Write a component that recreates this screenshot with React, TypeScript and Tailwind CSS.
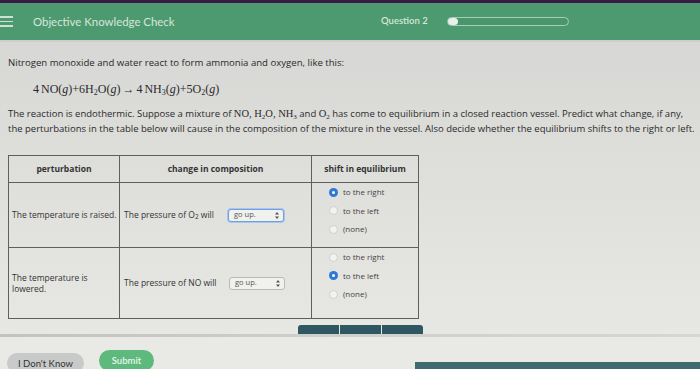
import React from 'react'

function Sel({ focused }: { focused?: boolean }) {
  return (
    <div
      className={
        'flex h-[13px] w-[56px] items-center justify-between rounded-[3px] bg-[#f1f1ee] pl-[5px] pr-[4px] text-[7.5px] leading-none text-[#555] ' +
        (focused ? 'border border-[#6f9fe0] shadow-[0_0_0_1px_#a9c6ee]' : 'border border-[#b9b9b6]')
      }
    >
      <span>go up.</span>
      <svg width="4" height="7" viewBox="0 0 4 7">
        <path d="M2 0 L4 2.6 L0 2.6 Z M2 7 L4 4.4 L0 4.4 Z" fill="#555" />
      </svg>
    </div>
  )
}

function Radio({ label, on }: { label: string; on?: boolean }) {
  return (
    <div className="flex h-[18.5px] items-center gap-[5px]">
      {on ? (
        <span className="flex h-[9px] w-[9px] items-center justify-center rounded-full bg-[#2f78d6]">
          <span className="h-[3px] w-[3px] rounded-full bg-white" />
        </span>
      ) : (
        <span className="h-[9px] w-[9px] rounded-full border border-[#cfcfcc] bg-[#f2f2ef]" />
      )}
      <span className="text-[8px] text-[#444]">{label}</span>
    </div>
  )
}

const serif = { fontFamily: '"Liberation Serif", serif' }

export default function App() {
  return (
    <div
      className="relative h-[369px] w-[700px] overflow-hidden bg-gradient-to-b from-[#d5d5d3] via-[#dfdfdc] to-[#e9e9e5] text-[#2a2a2a]"
      style={{ fontFamily: '"Open Sans", "DejaVu Sans", sans-serif' }}
    >
      {/* top strip + header */}
      <div className="h-[3px] bg-[#3a1b45]" />
      <div
        className="flex h-[37px] items-center bg-[#4e9a70] text-[#d6e6da]"
        style={{ fontFamily: 'Lato, "Open Sans", sans-serif' }}
      >
        <div className="flex w-[13px] flex-col gap-[3px]">
          <span className="h-[1.5px] bg-[#cfe0d4]" />
          <span className="h-[1.5px] bg-[#cfe0d4]" />
          <span className="h-[1.5px] bg-[#cfe0d4]" />
        </div>
        <span className="ml-[20px] w-[348px] text-[11.4px]">Objective Knowledge Check</span>
        <span className="text-[9.5px] font-semibold">Question 2</span>
        <div className="ml-[19px] flex h-[9px] w-[122px] items-center rounded-full border border-[#a9cdb5] bg-[#4a966b]">
          <span className="h-[7px] w-[10px] rounded-full bg-[#e9efe9]" />
        </div>
      </div>
      <div className="h-[2px] bg-[#cdcdcb]" />

      <div className="pl-[8px] pt-[14px]">
        <p className="text-[9.6px] leading-[14px]">
          Nitrogen monoxide and water react to form ammonia and oxygen, like this:
        </p>
        <p className="ml-[25px] mt-[12px] text-[12px] leading-[14px]" style={serif}>
          4<span className="ml-[2px]">NO</span>(<i>g</i>)+6H<sub className="text-[8px]">2</sub>O(<i>g</i>)
          <span className="mx-[2px]">→</span>4<span className="ml-[2px]">NH</span>
          <sub className="text-[8px]">3</sub>(<i>g</i>)+5O<sub className="text-[8px]">2</sub>(<i>g</i>)
        </p>
        <p className="mt-[10px] text-[9.5px] leading-[15px]">
          The reaction is endothermic. Suppose a mixture of{' '}
          <span style={serif} className="text-[10.5px]">
            NO, H<sub className="text-[7px]">2</sub>O, NH<sub className="text-[7px]">3</sub>
          </span>{' '}
          and{' '}
          <span style={serif} className="text-[10.5px]">
            O<sub className="text-[7px]">2</sub>
          </span>{' '}
          has come to equilibrium in a closed reaction vessel. Predict what change, if any,
          <br />
          the perturbations in the table below will cause in the composition of the mixture in the
          vessel. Also decide whether the equilibrium shifts to the right or left.
        </p>

        <table className="mt-[19px] w-[411px] border-collapse border border-[#5f5f5f] text-[8.5px] text-[#333]">
          <thead>
            <tr className="h-[27px]">
              <th className="w-[111px] border border-[#5f5f5f] font-bold">perturbation</th>
              <th className="w-[192px] border border-[#5f5f5f] font-bold">change in composition</th>
              <th className="border border-[#5f5f5f] font-bold">shift in equilibrium</th>
            </tr>
          </thead>
          <tbody>
            <tr className="h-[65px]">
              <td className="border border-[#5f5f5f] pl-[3px] whitespace-nowrap">
                The temperature is raised.
              </td>
              <td className="border border-[#5f5f5f] pl-[4px]">
                <div className="flex items-center">
                  <span className="w-[104px]">
                    The pressure of O<sub className="text-[6.5px]">2</sub> will
                  </span>
                  <Sel focused />
                </div>
              </td>
              <td className="border border-[#5f5f5f] pl-[17px] align-top">
                <Radio label="to the right" on />
                <Radio label="to the left" />
                <Radio label="(none)" />
              </td>
            </tr>
            <tr className="h-[71px]">
              <td className="border border-[#5f5f5f] pl-[3px] leading-[11px]">
                The temperature is
                <br />
                lowered.
              </td>
              <td className="border border-[#5f5f5f] pl-[4px]">
                <div className="flex items-center">
                  <span className="w-[105px]">The pressure of NO will</span>
                  <Sel />
                </div>
              </td>
              <td className="border border-[#5f5f5f] pl-[17px] align-top">
                <Radio label="to the right" />
                <Radio label="to the left" on />
                <Radio label="(none)" />
              </td>
            </tr>
          </tbody>
        </table>
      </div>

      {/* tool tabs */}
      <div className="ml-[298px] mt-[6px] flex h-[9px] w-[125px] gap-[1px] overflow-hidden rounded-t-[3px]">
        <span className="flex-1 bg-[#2e5762]" />
        <span className="flex-1 bg-[#2e5762]" />
        <span className="flex-1 bg-[#2e5762]" />
      </div>
      <div className="h-[3px] bg-gradient-to-r from-[#c2c2c0] via-[#cfcfcc] to-[#d6d6d3]" />
      <div className="flex items-start gap-[15px] bg-[#e9e9e6] pl-[7px] pt-[13px]">
        <button
          className="mt-[3px] h-[20px] w-[77px] rounded-full bg-[#c8c9c9] pt-[2px] text-[9.5px] leading-none text-[#333]"
          style={{ fontFamily: 'Lato, sans-serif' }}
        >
          I Don&apos;t Know
        </button>
        <button
          className="h-[21px] w-[55px] rounded-full bg-[#5dba7c] text-[9.5px] font-semibold leading-none text-[#e8f4ec]"
          style={{ fontFamily: 'Lato, sans-serif' }}
        >
          Submit
        </button>
      </div>
      <div className="absolute bottom-0 right-0 h-[7px] w-[285px] bg-[#3f6a6f]" />
    </div>
  )
}
